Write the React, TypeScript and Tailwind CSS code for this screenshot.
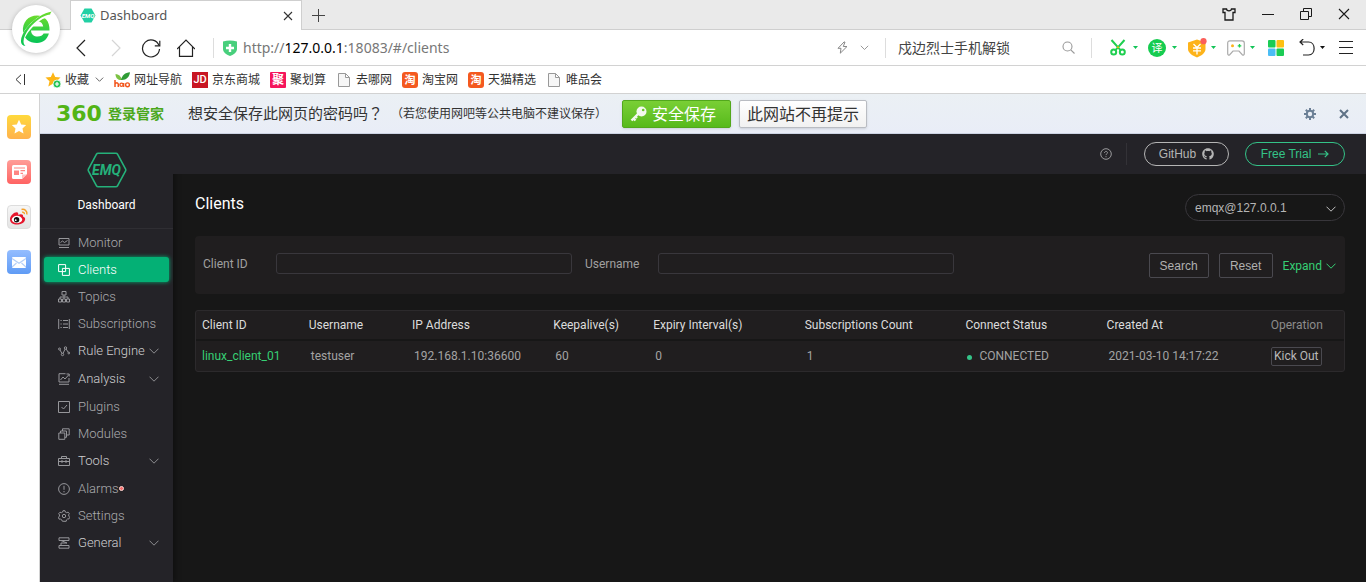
import React from "react";
import { FaGithub } from "react-icons/fa";

type P = { children: React.ReactNode; w?: number; h?: number; vb?: string; className?: string; sw?: number };

function Svg({ children, w = 12, h = 12, vb, className = "", sw = 1 }: P) {
  return (
    <svg
      width={w}
      height={h}
      viewBox={vb ?? `0 0 ${w} ${h}`}
      fill="none"
      stroke="currentColor"
      strokeWidth={sw}
      className={`shrink-0 ${className}`}
      aria-hidden="true"
    >
      {children}
    </svg>
  );
}

const Chevron = ({ className = "" }: { className?: string }) => (
  <Svg w={10} h={6} className={className}>
    <path d="M.5 .7 5 5.2 9.5 .7" />
  </Svg>
);

const Caret = ({ className = "text-[#12c457]" }: { className?: string }) => (
  <Svg w={5} h={3} className={className}>
    <path d="M0 0h5L2.5 3z" fill="currentColor" stroke="none" />
  </Svg>
);

/* ---------- browser chrome ---------- */

function BrowserLogo() {
  return (
    <div className="absolute left-3 top-[5px] flex size-12 items-center justify-center rounded-full bg-white shadow-[0_1px_5px_rgba(0,0,0,0.25)]">
      <svg width="34" height="38" viewBox="0 0 34 38" aria-hidden="true">
        <defs>
          <linearGradient id="lg" x1="0" y1="0" x2="0" y2="1">
            <stop offset="0" stopColor="#6bdc2c" />
            <stop offset="1" stopColor="#06c457" />
          </linearGradient>
        </defs>
        <path
          fill="url(#lg)"
          d="M4 22C3 12 9.500 5.500 18 5.500c7.500 0 13 5.500 12.500 15H12c.3 4 3 6 6.600 6 3 0 5-1.200 6-3h5.300C28 29.500 24 33 18 33 10 33 4.800 28.500 4 22zM12.300 16.500h11.900c-.6-3.700-3-5.300-6-5.300-3.100 0-5.400 2-5.900 5.300z"
        />
        <path
          d="M7 35C1 35.500 2.500 28 8 20.500 14 12.500 22 6.500 30.500 4.500"
          fill="none"
          stroke="#fff"
          strokeWidth="4"
        />
        <path
          fill="url(#lg)"
          d="M6.500 36C-.5 36 1 26 8 17.500 15 9 25 2.500 33 1.500c-1 .8-1.600 1.700-1.800 3C24 5 16 11.500 10.500 18 5 25 2.500 32.500 6.500 36z"
        />
      </svg>
    </div>
  );
}

function TitleBar() {
  return (
    <div className="flex h-[30px] items-end border-b border-[#cfcfcf] bg-[#eaeaea] pl-[70px]">
      <div className="-mb-px flex h-[30px] w-[232px] items-center border border-b-0 border-[#cfcfcf] bg-white pl-[9px] pr-2">
        <svg width="16" height="15" viewBox="0 0 16 15" aria-hidden="true" className="shrink-0">
          <path d="M4.500 .5h7L15.500 7.500l-4 7h-7L.5 7.500z" fill="#22d0a4" />
          <text x="8" y="9.800" textAnchor="middle" fontSize="6" fontWeight="700" fontStyle="italic" fill="#fff" fontFamily="Roboto">
            EMQ
          </text>
        </svg>
        <span className="ml-1 flex-1 pb-0.5 text-[13px] leading-5 text-[#555]">Dashboard</span>
        <button aria-label="Close tab" className="flex size-[10px] text-[#333]">
          <Svg w={10} h={10} sw={1.1}>
            <path d="M1 1l8 8M9 1L1 9" />
          </Svg>
        </button>
      </div>
      <button aria-label="New tab" className="mb-[7px] ml-[10px] text-[#444]">
        <Svg w={13} h={13}>
          <path d="M6.500 0v13M0 6.500h13" />
        </Svg>
      </button>
      <div className="ml-auto flex h-[30px] items-center gap-[26px] pr-4 text-[#1a1a1a]">
        <button aria-label="Skins">
          <Svg w={14} h={13} sw={1.3}>
            <path d="M4.500 1H1v3.500h2V12h8V4.500h2V1H9.500c0 1-1 1.800-2.500 1.800S4.500 2 4.500 1z" />
          </Svg>
        </button>
        <button aria-label="Minimize">
          <Svg w={12} h={12}>
            <path d="M0 6.500h12" />
          </Svg>
        </button>
        <button aria-label="Restore">
          <Svg w={12} h={12}>
            <path d="M.5 3.500h8v8h-8zM3.500 3.500v-3h8v8h-3" />
          </Svg>
        </button>
        <button aria-label="Close">
          <Svg w={12} h={12} sw={1.1}>
            <path d="M1 1l10 10M11 1L1 11" />
          </Svg>
        </button>
      </div>
    </div>
  );
}

function AddressBar() {
  return (
    <div className="flex h-9 items-center border-b border-[#d2d2d2] bg-white pl-[75px] pr-[13px]">
      <div className="flex items-center gap-[18px] text-[#222]">
        <button aria-label="Back">
          <Svg w={11} h={18} sw={1.2}>
            <path d="M10 1 2 9l8 8" />
          </Svg>
        </button>
        <button aria-label="Forward" className="ml-[7px] text-[#d5d5d5]">
          <Svg w={11} h={18} sw={1.2}>
            <path d="M1 1l8 8-8 8" />
          </Svg>
        </button>
        <button aria-label="Reload" className="ml-px">
          <Svg w={20} h={20} sw={1.2}>
            <path d="M18 7.500A8.500 8.500 0 1 0 18.500 11" />
            <path d="M18.800 2.800v5h-5" />
          </Svg>
        </button>
        <button aria-label="Home" className="-ml-0.5">
          <Svg w={18} h={18} sw={1.2}>
            <path d="M0 10 9 1l9 9M2.500 8v9.400h13V8" />
          </Svg>
        </button>
      </div>
      <div className="ml-[18px] h-5 w-px bg-[#ddd]" />
      <svg width="14" height="16" viewBox="0 0 14 16" className="ml-[9px] shrink-0" aria-hidden="true">
        <path d="M0 1.500Q7 -.5 14 1.500V9c0 3.500-4 6-7 7-3-1-7-3.500-7-7z" fill="#48cf7c" />
        <path d="M7 4v8M3 8h8" stroke="#fff" strokeWidth="2.400" />
      </svg>
      <div className="ml-1.5 flex-1 whitespace-nowrap text-sm text-[#777]">
        http://<span className="text-black">127.0.0.1</span>:18083/#/clients
      </div>
      <button aria-label="Speed mode" className="text-[#888]">
        <Svg w={11} h={13}>
          <path d="M7 1 1 7.300h3L3.300 12.200 10 5.500H6.300L8 1z" />
        </Svg>
      </button>
      <button aria-label="Address history" className="ml-3 text-[#999]">
        <Svg w={9} h={6}>
          <path d="M.8 .8 4.500 4.500 8.200 .8" />
        </Svg>
      </button>
      <div className="ml-4 h-5 w-px bg-[#ddd]" />
      <input
        aria-label="Search the web"
        defaultValue="戍边烈士手机解锁"
        className="ml-3 w-[164px] bg-transparent text-sm text-[#444] outline-none"
      />
      <button aria-label="Search" className="text-[#999]">
        <Svg w={13} h={13} sw={1.1}>
          <circle cx="5.500" cy="5.500" r="4.500" />
          <path d="M8.800 8.800 12.500 12.500" />
        </Svg>
      </button>
      <div className="ml-4 h-5 w-px bg-[#ddd]" />
      <div className="ml-[18px] flex items-center">
        <button aria-label="Screenshot" className="flex items-center gap-[7px]">
          <Svg w={16} h={17} className="text-[#1fcf50]" sw={2}>
            <circle cx="3.700" cy="13" r="2.500" />
            <circle cx="12.300" cy="13" r="2.500" />
            <path d="M1.500 1 10.500 11.200M14.500 1 5.500 11.200" />
            <circle cx="8" cy="8.300" r="1" fill="#f5b800" stroke="none" />
          </Svg>
          <Caret />
        </button>
        <button aria-label="Translate" className="ml-[10px] flex items-center gap-1.5">
          <span className="flex size-[18px] items-center justify-center rounded-full bg-[#16cc50] text-[11px] leading-none text-white">译</span>
          <Caret />
        </button>
        <button aria-label="Payment protection" className="ml-[11px] flex items-center gap-1">
          <svg width="19" height="20" viewBox="0 0 19 20" aria-hidden="true">
            <path d="M0 4.500 9 1.500l8.500 3V11c0 4-4.500 7-8.500 8.500C5 18 0 15 0 11z" fill="#fdb31a" />
            <path d="M5.500 6 9 9.500 12.500 6M5 10h8M5 12.800h8M9 9.500v7" stroke="#fff" strokeWidth="1.300" fill="none" />
            <circle cx="15.500" cy="3.200" r="3.100" fill="#fb5f5a" />
          </svg>
          <Caret />
        </button>
        <button aria-label="Games" className="ml-[11px] flex items-center gap-[5px]">
          <Svg w={18} h={16} className="text-[#aaa]" sw={1.2}>
            <path d="M3 .8h12c1.500 0 2.300.8 2.300 2.200v10.500c0 1.500-1 2-2 1.200L12 11H6l-3.300 3.700c-1 .8-2 .3-2-1.200V3C.7 1.600 1.500.8 3 .8z" />
            <circle cx="5.500" cy="5.800" r="1.500" fill="#fdb31a" stroke="none" />
            <path d="M12.500 4v3.600M10.700 5.800h3.600" stroke="#1fcf50" strokeWidth="1.300" />
          </Svg>
          <Caret />
        </button>
        <button aria-label="Extensions" className="ml-[13px]">
          <svg width="16" height="16" viewBox="0 0 16 16" aria-hidden="true">
            <rect width="7.500" height="7.500" rx="1" fill="#1bcc55" />
            <rect x="8.500" width="7.500" height="7.500" rx="1" fill="#fdc012" />
            <rect y="8.500" width="7.500" height="7.500" rx="1" fill="#4bbdf5" />
            <rect x="8.500" y="8.500" width="7.500" height="7.500" rx="1" fill="#1bcc55" />
          </svg>
        </button>
        <button aria-label="Undo close tab" className="ml-[15px] flex items-center gap-[5px] text-[#222]">
          <Svg w={16} h={17} sw={1.200}>
            <path d="M1 3h8.500c7.500 0 7.500 13 0 13H4M4.200 0 1 3l3.200 3" />
          </Svg>
          <Caret className="text-[#111]" />
        </button>
        <button aria-label="Menu" className="ml-[14px] text-[#222]">
          <Svg w={14} h={14}>
            <path d="M0 .5h14M0 6.500h14M0 12.500h14" />
          </Svg>
        </button>
      </div>
    </div>
  );
}

const PageIcon = () => (
  <Svg w={12} h={14} className="text-[#999]">
    <path d="M.5 .5h7l4 4v9H.5zM7.500 .5v4h4" fill="#f6f6f6" />
  </Svg>
);

const TaoIcon = () => (
  <span className="flex size-4 items-center justify-center rounded-[3px] bg-[#f4591f] text-[11px] font-bold leading-none text-white">淘</span>
);

function BookmarkItem({ icon, label }: { icon: React.ReactNode; label: string }) {
  return (
    <a href="#" className="flex items-center gap-1">
      <span className="flex w-4 justify-center">{icon}</span>
      {label}
    </a>
  );
}

function Bookmarks() {
  return (
    <div className="flex h-7 items-center gap-[10px] border-b border-[#d2d2d2] bg-white pl-[15px] text-xs text-[#333]">
      <button aria-label="Collapse bookmarks" className="mr-[10px] text-[#333]">
        <Svg w={10} h={11}>
          <path d="M6 .8 1 5.500l5 4.700M9.500 0v11" />
        </Svg>
      </button>
      <button className="flex items-center gap-1">
        <svg width="16" height="16" viewBox="0 0 16 16" aria-hidden="true">
          <path d="M8 .3l2.200 4.800 5.300.5-4 3.600 1.200 5.300L8 11.800l-4.700 2.700 1.200-5.300-4-3.600 5.300-.5z" fill="#fdb515" />
          <circle cx="12" cy="12" r="4" fill="#25c455" stroke="#fff" strokeWidth=".8" />
          <path d="M12 10v4M10 12h4" stroke="#fff" strokeWidth="1.200" />
        </svg>
        收藏
        <Svg w={9} h={5} className="ml-[2px] text-[#666]">
          <path d="M.8 .6 4.500 4.300 8.200 .6" />
        </Svg>
      </button>
      <BookmarkItem
        label="网址导航"
        icon={
          <svg width="17" height="16" viewBox="0 0 17 16" aria-hidden="true" className="shrink-0">
            <path d="M8 8C7 4 4.500 2 1.500 2 1.500 6 4 8.500 8 8z" fill="#7cc243" />
            <path d="M7 8C8 3.500 11 .5 16 .3 15.500 5 12 8.500 7 8z" fill="#2f9c36" />
            <path d="M1 8v7M1 12q2-2.500 3.300 0v3" stroke="#f2541b" strokeWidth="1.500" fill="none" />
            <circle cx="7.500" cy="12.800" r="1.600" stroke="#f2541b" strokeWidth="1.300" fill="none" />
            <path d="M9.700 11v4" stroke="#f2541b" strokeWidth="1.300" />
            <circle cx="13.500" cy="12.800" r="1.900" stroke="#f2541b" strokeWidth="1.400" fill="none" />
          </svg>
        }
      />
      <BookmarkItem
        label="京东商城"
        icon={<span className="flex size-4 shrink-0 items-center justify-center bg-[#c81623] font-['Roboto'] text-[11px] font-medium leading-none text-white">JD</span>}
      />
      <BookmarkItem
        label="聚划算"
        icon={<span className="flex size-4 shrink-0 items-center justify-center rounded-[1px] bg-[#f5155c] text-xs font-bold leading-none text-white">聚</span>}
      />
      <BookmarkItem label="去哪网" icon={<PageIcon />} />
      <BookmarkItem label="淘宝网" icon={<TaoIcon />} />
      <BookmarkItem label="天猫精选" icon={<TaoIcon />} />
      <BookmarkItem label="唯品会" icon={<PageIcon />} />
    </div>
  );
}

function SideRail() {
  return (
    <div className="flex w-10 shrink-0 flex-col items-center gap-[21px] border-r border-[#d2d2d2] bg-white pr-px pt-[21px]">
      <button aria-label="Favorites" className="flex size-6 items-center justify-center rounded bg-linear-to-b from-[#ffd93b] to-[#ffb24d]">
        <Svg w={16} h={16}>
          <path d="M8 .8l2.200 4.700 5 .6-3.700 3.500 1 5L8 12.100l-4.500 2.500 1-5L.8 6.100l5-.6z" fill="#fff" stroke="none" />
        </Svg>
      </button>
      <button aria-label="News" className="flex size-6 items-center justify-center rounded bg-linear-to-b from-[#ff9d98] to-[#ff6262]">
        <svg width="15" height="14" viewBox="0 0 15 14" aria-hidden="true">
          <path d="M1.500 0h12Q15 0 15 1.500V9l-5 5H1.500Q0 14 0 12.500v-11Q0 0 1.500 0z" fill="#fff" />
          <path d="M2 3h11M8.500 5.700H13M8.500 8.300H11" stroke="#ff8582" strokeWidth="1.200" />
          <rect x="2" y="5.500" width="5" height="4.500" fill="#ff8582" />
          <path d="M10 14v-4.500h5z" fill="#ffc4c2" />
        </svg>
      </button>
      <button aria-label="Weibo" className="flex size-6 items-center justify-center rounded border border-[#ddd] bg-linear-to-b from-[#f6f6f6] to-[#e4e4e4]">
        <svg width="20" height="18" viewBox="0 0 20 18" className="shrink-0" aria-hidden="true">
          <path d="M1 11.500C1 7.500 6 3.500 8.500 4.500c1 .5.8 1.500.6 2.300C12 5.800 14.500 6 14 8.500c2 .8 2.500 2 2 3.500-1 3.500-5 4.500-8 4.500-4 0-7-2-7-5z" fill="#e6162d" />
          <ellipse cx="8" cy="11.500" rx="5.200" ry="3.700" fill="#fff" />
          <circle cx="7.600" cy="11.700" r="2.700" fill="#111" />
          <circle cx="6.700" cy="12.200" r=".9" fill="#fff" />
          <path d="M12.500 1.500c3-.8 6 1.500 5.300 5M13 4.200c1.500-.3 2.600.6 2.300 2" stroke="#f5a02a" strokeWidth="1.400" fill="none" />
        </svg>
      </button>
      <button aria-label="Mail" className="flex size-6 items-center justify-center rounded bg-linear-to-b from-[#94bdff] to-[#5f9bf5]">
        <svg width="14" height="11" viewBox="0 0 14 11" aria-hidden="true">
          <rect width="14" height="11" rx="1" fill="#fff" />
          <path d="M0 1.500l7 4.800 7-4.800M0 10l4.500-4M14 10 9.500 6" stroke="#b5cff7" strokeWidth="1.200" fill="none" />
        </svg>
      </button>
    </div>
  );
}

function PasswordBar() {
  return (
    <div className="flex h-10 items-center border-b border-[#ccd3e3] bg-linear-to-b from-[#ebf0f4] to-[#e9edf7] pl-4 pr-4 whitespace-nowrap text-[#333]">
      <span className="font-['DejaVu_Sans'] text-[22px] font-bold leading-none text-[#52b415]">360</span>
      <span className="ml-1.5 text-sm font-bold text-[#4ba81b]">登录管家</span>
      <span className="ml-6 text-[15px]">
        想安全保存此网页的密码吗<span className="font-['Noto_Sans_CJK_TC']">？</span>
      </span>
      <span className="ml-2 text-xs">（若您使用网吧等公共电脑不建议保存）</span>
      <button className="ml-[15px] flex h-7 w-[109px] shrink-0 items-center rounded-[2px] border border-[#52a81c] bg-linear-to-b from-[#79cf35] to-[#57ba1a] pl-[7px] text-base text-white shadow-sm">
        <svg width="17" height="16" viewBox="0 0 17 16" className="mr-[5px] shrink-0" aria-hidden="true">
          <path d="M9 7 1.500 14.500M3.500 12.500l2 2M5.500 10.500l1.500 1.500" stroke="#f3f8ee" strokeWidth="2.400" />
          <circle cx="11.500" cy="5.500" r="5" fill="#f3f8ee" />
          <circle cx="13.200" cy="4" r="1.300" fill="#6bc52b" />
        </svg>
        安全保存
      </button>
      <button className="ml-2 h-7 w-32 shrink-0 rounded-[2px] border border-[#b9bcc2] bg-linear-to-b from-white to-[#f1f1f1] text-base text-[#333] shadow-sm">
        此网站不再提示
      </button>
      <button aria-label="Settings" className="ml-auto text-[#6b7f95]">
        <Svg w={12} h={12} sw={2}>
          <circle cx="6" cy="6" r="3.200" />
          <path d="M6 0v2.500M6 9.500V12M0 6h2.500M9.500 6H12M1.800 1.800l1.700 1.700M8.500 8.500l1.700 1.700M10.200 1.800 8.500 3.500M3.500 8.500l-1.700 1.700" />
        </Svg>
      </button>
      <button aria-label="Dismiss" className="ml-[23px] mr-px text-[#5f7286]">
        <Svg w={10} h={10} sw={2}>
          <path d="M1 1l8 8M9 1 1 9" />
        </Svg>
      </button>
    </div>
  );
}

/* ---------- dashboard ---------- */

type Item = { label: string; icon: React.ReactNode; group?: boolean; active?: boolean; dot?: boolean };

const items: Item[] = [
  { label: "Monitor", icon: <path d="M1 1.500h10v6.500H1zM1 10.500h10M2.500 5.500 4.500 4l2 1.500L9.500 3.500" /> },
  { label: "Clients", active: true, icon: <path d="M.6 .6h7v7h-7zM4.400 7.600v3.800h7v-7H7.600M4.400 7.600V4.400h3.200" /> },
  { label: "Topics", icon: <path d="M4 .5h4v3.500H4zM.5 8h3v3h-3zM4.500 8h3v3h-3zM8.500 8h3v3h-3zM6 4v4M2 8V6h8v2" /> },
  { label: "Subscriptions", icon: <path d="M.7 1v10M11.300 1v10M2.500 2.500h1.200M5 2.500h5M2.500 6h1.200M5 6h5M2.500 9.500h1.200M5 9.500h5" /> },
  {
    label: "Rule Engine",
    group: true,
    icon: (
      <>
        <circle cx="1.500" cy="4" r="1" />
        <circle cx="4.500" cy="9.500" r="1.200" />
        <circle cx="7.500" cy="3" r="1.200" />
        <circle cx="10.800" cy="8" r=".9" />
        <path d="M2 5 4 8.500M5 8.500 7 4.200M8 4l2.300 3.300" />
      </>
    ),
  },
  { label: "Analysis", group: true, icon: <path d="M7.500 .7H1v8.300h10V5M1 11.300h10M2.500 7l2.500-3 2 2 4-4.500M8.500 1h2.700v2.500" /> },
  { label: "Plugins", icon: <path d="M.5 .5h11v11H.5zM3.500 6l2 2 3.500-4" /> },
  { label: "Modules", icon: <path d="M.8 5h6v6.300h-6zM2.500 5V3h6v6.300H6.800M4.500 3V.8h6.700V7H8.500" /> },
  { label: "Tools", group: true, icon: <path d="M.5 3.500h11v7H.5zM3.500 3.500v-2h5v2M.5 6.500h11M4 5v3M8 5v3" /> },
  {
    label: "Alarms",
    dot: true,
    icon: (
      <>
        <circle cx="6" cy="6" r="5.400" />
        <path d="M6 2.800v4M6 8v1.300" />
      </>
    ),
  },
  {
    label: "Settings",
    icon: (
      <>
        <path d="M5 .7h2l.4 1.400 1.300.6 1.400-.6 1.200 1.500-.7 1.300.3 1.300.9 1-.8 1.700-1.500.1-1 .9-.3 1.400H6l-1.700-.1-.6-1.400-1.200-.7-1.500 0-.5-1.900 1-1.100L1.600 5 .7 3.700 2 2.200l1.400.5 1.200-.6z" />
        <circle cx="6" cy="6" r="1.700" />
      </>
    ),
  },
  { label: "General", group: true, icon: <path d="M1 .8h10v2.700H1zM1 8.500h10v2.700H1zM3 3.500 9 6M3 6h6M3 8.500V6" /> },
];

function Sidebar() {
  return (
    <nav className="w-[133px] shrink-0 bg-[#242328] shadow-[2px_0_6px_rgba(0,0,0,0.35)]">
      <div className="flex h-[95px] flex-col items-center border-b border-[#2f2e33] pt-[18px]">
        <svg width="40" height="36" viewBox="0 0 40 36" aria-hidden="true">
          <path d="M11 1.200h18q1 0 1.500.9L38.600 17q.5 1 0 2L30.500 33.900q-.5.900-1.500.9H11q-1 0-1.500-.9L1.400 19q-.5-1 0-2L9.500 2.100q.5-.9 1.500-.9z" fill="none" stroke="#25b17a" strokeWidth="1.600" />
          <text x="19.500" y="23" textAnchor="middle" fontSize="14" fontWeight="700" fontStyle="italic" fill="#25b17a" fontFamily="Roboto">
            EMQ
          </text>
        </svg>
        <span className="mt-[9px] text-xs text-white">Dashboard</span>
      </div>
      <ul className="px-1 text-[13px] font-light text-[#ababae]">
        {items.map((it) => (
          <li key={it.label} className={it.group ? "flex h-7 items-center" : "flex h-[27px] items-center"}>
            <a
              href="#"
              className={
                it.active
                  ? "flex h-[25px] w-full items-center rounded-[3px] bg-[#04b075] pl-[14px] text-white shadow-[0_0_4px_#04b075]"
                  : it.group
                    ? "flex w-full items-center pl-[14px] pr-[10px] text-[#cfcfd1]"
                    : "flex w-full items-center pl-[14px]"
              }
            >
              <Svg sw={1} className={it.active ? "text-white" : "text-[#96969a]"}>
                {it.icon}
              </Svg>
              <span className="ml-2">{it.label}</span>
              {it.dot && <span className="size-[5px] rounded-full border border-[#ffd9d5] bg-[#f56c6c]" />}
              {it.group && <Chevron className="ml-auto text-[#8d8d90]" />}
            </a>
          </li>
        ))}
      </ul>
    </nav>
  );
}

function AppHeader() {
  return (
    <header className="flex h-10 items-center justify-end bg-[#242328] pr-[21px] font-['Liberation_Sans'] text-xs">
      <a href="#" aria-label="Help" className="text-[#9a9a9c]">
        <Svg w={12} h={12}>
          <circle cx="6" cy="6" r="5.300" />
          <path d="M4.500 4.900c0-2 3-2 3-.1 0 1-1.500 1-1.500 2.300M6 8.200v1" />
        </Svg>
      </a>
      <div className="ml-[14px] mr-[17px] h-[22px] w-px bg-[#333237]" />
      <a href="#" className="flex h-6 w-[85px] items-center justify-center gap-1.5 rounded-full border border-[#b5b5b5] text-[#b5b5b5]">
        GitHub
        <FaGithub size={12} />
      </a>
      <a href="#" className="ml-4 flex h-6 w-[100px] items-center justify-center gap-[7px] rounded-full border border-[#34c388] text-[#34c388]">
        Free Trial
        <Svg w={11} h={8} sw={1.2}>
          <path d="M0 4h10M6.800 .8 10 4 6.800 7.200" />
        </Svg>
      </a>
    </header>
  );
}

function FilterPanel() {
  const field = "h-[21px] min-w-0 flex-1 rounded-[3px] border border-[#39373c] bg-transparent px-2 text-[#aaa] outline-none";
  const btn = "h-[25px] rounded-[2px] border border-[#4a494f] font-['Liberation_Sans'] text-[#b0b0b0]";
  return (
    <form className="mt-[15px] grid h-[58px] grid-cols-3 gap-x-[13px] rounded bg-[#201e1f] pl-2 pr-[9px] pt-[17px] text-xs text-[#a0a0a0]">
      <div className="flex h-[21px] items-center">
        <label htmlFor="cid" className="w-[73px]">Client ID</label>
        <input id="cid" className={field} />
      </div>
      <div className="flex h-[21px] items-center">
        <label htmlFor="user" className="w-[73px]">Username</label>
        <input id="user" className={field} />
      </div>
      <div className="flex h-[25px] items-center justify-end gap-[10px]">
        <button type="button" className={`w-[60px] ${btn}`}>Search</button>
        <button type="button" className={`w-[54px] ${btn}`}>Reset</button>
        <button type="button" className="flex items-center gap-1 text-[#36cf74]">
          Expand
          <Chevron />
        </button>
      </div>
    </form>
  );
}

const th = "pl-[6px] text-left font-normal";
const td = "pl-2 font-normal";

function ClientsTable() {
  return (
    <div className="mt-4 overflow-hidden rounded-[3px] border border-[#2c2a2c] bg-[#201e1f]">
      <table className="w-full table-fixed border-collapse whitespace-nowrap text-xs text-[#a3a3a3]">
        <colgroup>
          <col className="w-[9.3%]" />
          <col className="w-[9%]" />
          <col className="w-[12.3%]" />
          <col className="w-[8.7%]" />
          <col className="w-[13.2%]" />
          <col className="w-[14%]" />
          <col className="w-[12.3%]" />
          <col className="w-[14.3%]" />
          <col className="w-[6.9%]" />
        </colgroup>
        <thead>
          <tr className="h-[29px] border-b-2 border-[#171717] text-[#dcdcdc]">
            <th className={th}>Client ID</th>
            <th className={th}>Username</th>
            <th className={th}>IP Address</th>
            <th className={th}>Keepalive(s)</th>
            <th className={th}>Expiry Interval(s)</th>
            <th className={th}>Subscriptions Count</th>
            <th className={th}>Connect Status</th>
            <th className={th}>Created At</th>
            <th className={`${th} text-[#8c8c8c]`}>Operation</th>
          </tr>
        </thead>
        <tbody>
          <tr className="h-[31px]">
            <td className="pl-[6px]">
              <a href="#" className="text-[#36cf74]">linux_client_01</a>
            </td>
            <td className={td}>testuser</td>
            <td className={td}>192.168.1.10:36600</td>
            <td className={td}>60</td>
            <td className={td}>0</td>
            <td className={td}>1</td>
            <td className={td}>
              <span className="flex items-center gap-[7px]">
                <span className="mt-[2px] size-[5px] rounded-full bg-[#34c388]" />
                CONNECTED
              </span>
            </td>
            <td className={td}>2021-03-10 14:17:22</td>
            <td className="pl-[6px]">
              <button className="flex h-[19px] w-[51px] items-center justify-center rounded-[2px] border border-[#4a494f] text-[#b8b8b8]">Kick Out</button>
            </td>
          </tr>
        </tbody>
      </table>
    </div>
  );
}

export default function App() {
  return (
    <div className="relative flex min-h-screen flex-col bg-white font-['Noto_Sans','Noto_Sans_CJK_SC',sans-serif]">
      <TitleBar />
      <AddressBar />
      <Bookmarks />
      <BrowserLogo />
      <div className="flex flex-1">
        <SideRail />
        <div className="flex min-w-0 flex-1 flex-col">
          <PasswordBar />
          <div className="flex flex-1 overflow-hidden bg-[#171717] font-['Roboto',sans-serif]">
            <Sidebar />
            <div className="min-w-0 flex-1">
              <AppHeader />
              <main className="pl-[22px] pr-[21px]">
                <div className="flex items-start justify-between pt-5">
                  <h1 className="text-base leading-5 text-white">Clients</h1>
                  <div className="relative">
                    <select
                      aria-label="Node"
                      className="h-[27px] w-40 appearance-none rounded-full border border-[#38363b] bg-transparent pl-[9px] font-['Liberation_Sans'] text-xs text-[#b5b5b5] outline-none"
                    >
                      <option>emqx@127.0.0.1</option>
                    </select>
                    <Chevron className="pointer-events-none absolute right-[9px] top-3 text-[#c0c0c0]" />
                  </div>
                </div>
                <FilterPanel />
                <ClientsTable />
              </main>
            </div>
          </div>
        </div>
      </div>
    </div>
  );
}
